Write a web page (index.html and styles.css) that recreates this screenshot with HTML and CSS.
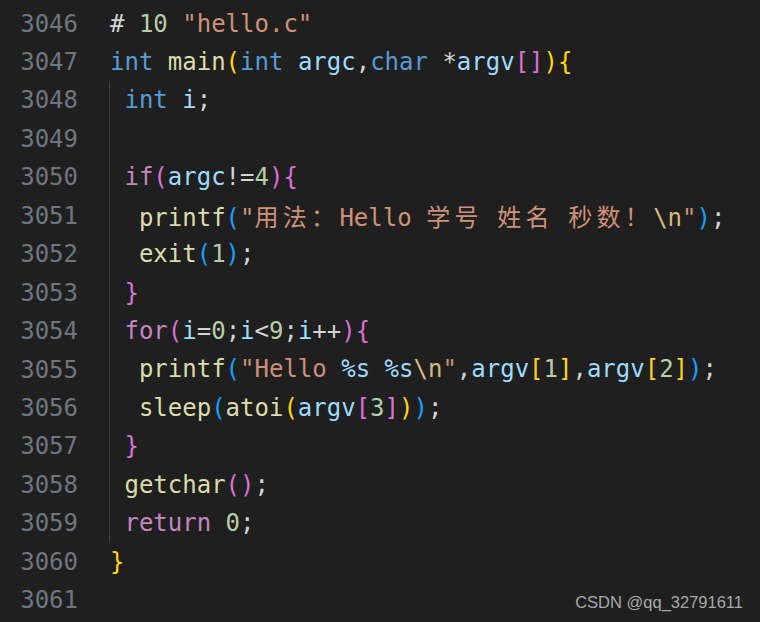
FILE: index.html
```html
<!DOCTYPE html>
<html lang="zh">
<head>
<meta charset="utf-8">
<title>hello.c</title>
<link rel="stylesheet" href="styles.css">
</head>
<body>
<div class="editor">
  <div class="gutter">
    <div>3046</div><div>3047</div><div>3048</div><div>3049</div>
    <div>3050</div><div>3051</div><div>3052</div><div>3053</div>
    <div>3054</div><div>3055</div><div>3056</div><div>3057</div>
    <div>3058</div><div>3059</div><div>3060</div><div>3061</div>
  </div>
  <div class="code">
    <div class="ln"><span class="p">#</span> <span class="n">10</span> <span class="s">"hello.c"</span></div>
    <div class="ln"><span class="k">int</span> <span class="f">main</span><span class="b1">(</span><span class="k">int</span> <span class="v">argc</span><span class="p">,</span><span class="k">char</span> <span class="p">*</span><span class="v">argv</span><span class="b2">[]</span><span class="b1">){</span></div>
    <div class="block">
      <div class="ln"> <span class="k">int</span> <span class="v">i</span><span class="p">;</span></div>
      <div class="ln"> </div>
      <div class="ln"> <span class="c">if</span><span class="b2">(</span><span class="v">argc</span><span class="p">!=</span><span class="n">4</span><span class="b2">){</span></div>
      <div class="ln">  <span class="f">printf</span><span class="b3">(</span><span class="s">"<span class="cjk">用法：</span>Hello <span class="cjk">学号</span> <span class="cjk">姓名</span> <span class="cjk">秒数！</span></span><span class="e">\n</span><span class="s">"</span><span class="b3">)</span><span class="p">;</span></div>
      <div class="ln">  <span class="f">exit</span><span class="b3">(</span><span class="n">1</span><span class="b3">)</span><span class="p">;</span></div>
      <div class="ln"> <span class="b2">}</span></div>
      <div class="ln"> <span class="c">for</span><span class="b2">(</span><span class="v">i</span><span class="p">=</span><span class="n">0</span><span class="p">;</span><span class="v">i</span><span class="p">&lt;</span><span class="n">9</span><span class="p">;</span><span class="v">i</span><span class="p">++</span><span class="b2">){</span></div>
      <div class="ln">  <span class="f">printf</span><span class="b3">(</span><span class="s">"Hello </span><span class="v">%s</span><span class="s"> </span><span class="v">%s</span><span class="e">\n</span><span class="s">"</span><span class="p">,</span><span class="v">argv</span><span class="b1">[</span><span class="n">1</span><span class="b1">]</span><span class="p">,</span><span class="v">argv</span><span class="b1">[</span><span class="n">2</span><span class="b1">]</span><span class="b3">)</span><span class="p">;</span></div>
      <div class="ln">  <span class="f">sleep</span><span class="b3">(</span><span class="f">atoi</span><span class="b1">(</span><span class="v">argv</span><span class="b2">[</span><span class="n">3</span><span class="b2">]</span><span class="b1">)</span><span class="b3">)</span><span class="p">;</span></div>
      <div class="ln"> <span class="b2">}</span></div>
      <div class="ln"> <span class="f">getchar</span><span class="b2">()</span><span class="p">;</span></div>
      <div class="ln"> <span class="c">return</span> <span class="n">0</span><span class="p">;</span></div>
    </div>
    <div class="ln"><span class="b1">}</span></div>
    <div class="ln"> </div>
  </div>
</div>
<div class="mark">CSDN @qq_32791611</div>
</body>
</html>
```
FILE: styles.css
```css
html, body {
  margin: 0;
  padding: 0;
  background: #1f1f1f;
}
body {
  width: 760px;
  height: 622px;
  overflow: hidden;
  position: relative;
}
.editor {
  display: flex;
  padding-top: 4.5px;
  font-family: "DejaVu Sans Mono", "Noto Sans CJK SC", monospace;
  font-size: 24px;
  line-height: 38.45px;
  color: #d4d4d4;
}
.gutter {
  width: 78px;
  text-align: right;
  color: #6e7681;
  flex: none;
}
.code {
  margin-left: 32px;
  flex: 1;
}
.ln {
  white-space: pre;
  height: 38.45px;
}
.block {
  margin-left: -1px;
  border-left: 1px solid #404040;
}
.p { color: #d4d4d4; }
.k { color: #569cd6; }
.c { color: #c586c0; }
.f { color: #dcdcaa; }
.v { color: #9cdcfe; }
.n { color: #b5cea8; }
.s { color: #ce9178; }
.e { color: #d7ba7d; }
.b1 { color: #ffd700; }
.b2 { color: #da70d6; }
.b3 { color: #179fff; }
.cjk {
  font-family: "Noto Sans CJK SC", sans-serif;
  letter-spacing: 4.3px;
}
.mark {
  position: absolute;
  right: 17px;
  top: 593px;
  font-family: "Liberation Sans", Arial, sans-serif;
  font-size: 16.5px;
  color: #a9a9a9;
}
```
